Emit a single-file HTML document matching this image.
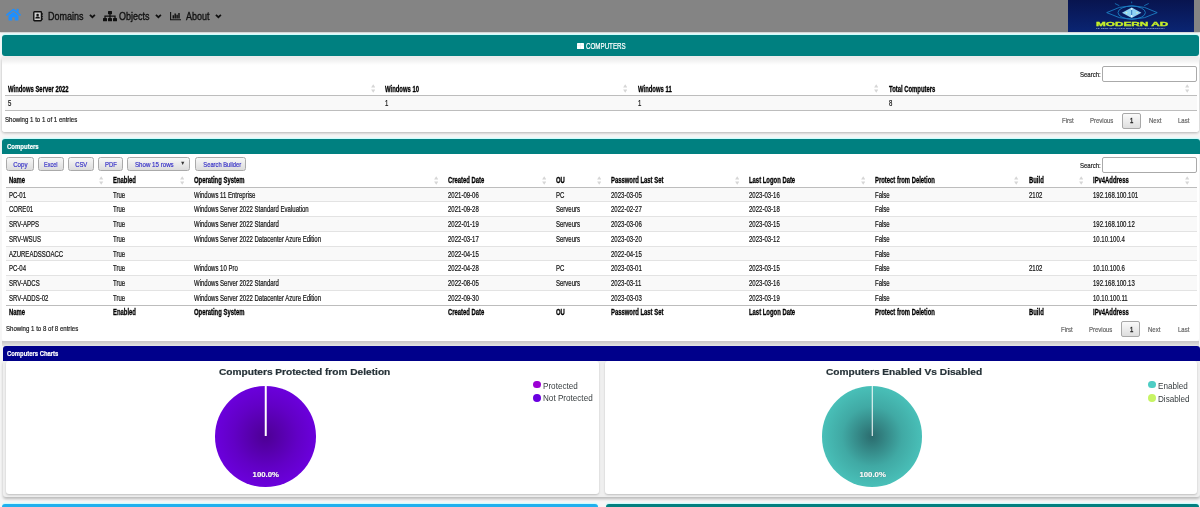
<!DOCTYPE html>
<html lang="en"><head><meta charset="utf-8"><title>Modern AD - Computers</title>
<style>
html,body{margin:0;padding:0}
body{width:1200px;height:507px;overflow:hidden;position:relative;background:#f6f6f6;font-family:"Liberation Sans",sans-serif;font-size:8px;color:#222;}
.c{display:inline-block;transform:scaleX(.75);transform-origin:0 50%;white-space:nowrap;-webkit-text-stroke:.22px}
#nav{position:absolute;left:0;top:0;width:1200px;height:31.5px;background:#848484;box-shadow:0 .5px 1.5px rgba(0,0,0,.35)}
#nav .t{position:absolute;top:9.1px;font-size:11px;color:#111;line-height:14px;transform:scaleX(.815);-webkit-text-stroke:.35px}
#nav svg{position:absolute}
#logo{position:absolute;left:1068px;top:0;width:126px;height:31.5px;background:linear-gradient(#08144f,#0a2573);overflow:hidden}
.hdr{position:absolute;left:2.3px;width:1197.7px;color:#fff;font-weight:bold}
.teal{background:#008080;box-shadow:0 -1px 1.5px rgba(190,255,255,.9)}
.navy{background:#00008b}
.hdr .c{position:absolute;left:4.3px}
.card{position:absolute;left:2px;width:1197px;background:#fff;border-radius:0 0 3px 3px;box-shadow:0 1px 3px rgba(0,0,0,.28)}
table.dt{position:absolute;border-collapse:collapse;table-layout:fixed;font-size:8.3px}
table.dt td .c{transform:scaleX(.725);position:relative;top:.1px}
table.dt tfoot th .c{top:.1px}
table.dt th,table.dt td{padding:0 0 0 2.8px;text-align:left;position:relative;white-space:nowrap;overflow:visible}
table.dt th .c{transform:scaleX(.71);position:relative;top:.1px;-webkit-text-stroke:.3px}
table.t1 th .c{top:.8px}
table.t1 .so{right:7.7px}
table.dt thead th{height:13.5px;border-bottom:1px solid #bdbdbd;font-weight:bold;color:#000;vertical-align:middle}
table.dt tfoot th{height:13.5px;font-weight:bold;color:#000;vertical-align:middle}
table.dt td{height:13.75px;border-top:1px solid #e3e3e3;color:#151515;vertical-align:middle}
table.dt tbody tr:first-child td{border-top:none}
table.dt tbody tr.odd td{background:#f9f9f9}
table.dt tbody tr:last-child td{border-bottom:1px solid #bdbdbd}
.so{position:absolute;right:7px;top:2.4px}
.srch{position:absolute;font-size:8px}
.inp{position:absolute;left:1102px;width:95px;border:1px solid #aaa;border-radius:2px;background:#fff;box-sizing:border-box}
.info{position:absolute;left:5.2px;font-size:8px;color:#222;transform:scaleX(.762)}
.pg{position:absolute;left:0;width:1200px;height:16px;font-size:8px;color:#666}
.pl{position:absolute;top:3.5px;line-height:9px}
.pb{position:absolute;left:1122px;top:0;width:18.8px;height:16px;box-sizing:border-box;border:1px solid #a8a8a8;border-radius:2px;background:linear-gradient(#fafafa,#dedede);color:#222}
.pb .c{position:absolute;left:7.4px;top:2.6px;line-height:9px;-webkit-text-stroke:.35px}
.btn{position:absolute;top:157px;height:13.6px;box-sizing:border-box;border:1px solid #aaa;border-radius:2.5px;background:linear-gradient(#f8f8f8,#dcdcdc);color:#3a35c8;font-size:8px;line-height:11px;text-align:center;white-space:nowrap;overflow:visible}
.btn .c{position:relative;top:.9px;transform-origin:50% 50%}
.chart{position:absolute;top:361.2px;height:132.6px;background:#fff;border-radius:3px;box-shadow:0 1px 2px rgba(0,0,0,.2)}
.ct{position:absolute;font-weight:bold;font-size:8.6px;color:#263238;white-space:nowrap;top:366.1px;line-height:12px;transform:scaleX(1.18);transform-origin:0 50%;-webkit-text-stroke:.2px}
.lg{position:absolute;font-size:8.7px;color:#373d3f;line-height:10px;white-space:nowrap;transform:scaleX(.935);transform-origin:0 50%}
.dot{position:absolute;width:7.8px;height:7.8px;border-radius:50%;margin:-.2px 0 0 -.2px}
.pie{position:absolute;width:100.6px;height:100.6px;border-radius:50%;top:386.2px}
.pie i{position:absolute;left:49px;top:0;transform:translateX(.75px);width:1.5px;height:50.3px;background:#fff}
.pl2{position:absolute;font-size:7.8px;font-weight:bold;color:#fff;top:469.9px;-webkit-text-stroke:.15px;line-height:10px;text-shadow:0 0 1px rgba(0,0,0,.4)}
#w{position:absolute;left:0;top:0;width:1200px;height:507px;overflow:hidden;will-change:transform}
</style></head><body><div id="w">

<div id="nav">
 <svg style="left:5.9px;top:8px" width="14.95" height="13.3" viewBox="0 0 576 512"><path fill="#1e8fff" d="M280.4 148.3L96 300.1V464a16 16 0 0 0 16 16l112.1-.3a16 16 0 0 0 15.900-16V368a16 16 0 0 1 16-16h64a16 16 0 0 1 16 16v95.600a16 16 0 0 0 16 16.100L464 480a16 16 0 0 0 16-16V300L295.700 148.300a12.200 12.200 0 0 0-15.300 0zM571.600 251.500L488 182.600V44a12 12 0 0 0-12-12h-56a12 12 0 0 0-12 12v72.600L318.500 43a48 48 0 0 0-61 0L4.300 251.500a12 12 0 0 0-1.600 16.900l25.500 31a12 12 0 0 0 16.900 1.600l235.200-193.700a12.200 12.200 0 0 1 15.300 0L530.900 301a12 12 0 0 0 16.900-1.600l25.500-31a12 12 0 0 0-1.700-16.900z"/></svg>
 <svg style="left:33px;top:11px" width="10" height="10.5" viewBox="0 0 10 10.5"><rect x=".8" y=".8" width="7.6" height="8.9" rx=".6" fill="rgba(255,255,255,.6)" stroke="#111" stroke-width="1.4"/><circle cx="4.6" cy="4" r="1.3" fill="#111"/><path d="M2.3 7.6c0-1.500 1-2 2.300-2s2.300.5 2.300 2z" fill="#111"/><path d="M9.300 2.200v1.600M9.300 4.700v1.600M9.300 7.200v1.600" stroke="#111" stroke-width="1"/></svg>
 <span class="t c" style="left:48px">Domains</span>
 <svg style="left:88.500px;top:14px" width="7" height="5" viewBox="0 0 7 5"><path d="M.9.9L3.4 3.2 5.9.9" fill="none" stroke="#111" stroke-width="1.75"/></svg>
 <svg style="left:102.500px;top:11px" width="14" height="10.500" viewBox="0 0 14 10.500"><rect x="5" y="0" width="4" height="3.300" rx=".5" fill="#111"/><rect x="0" y="7" width="4" height="3.300" rx=".5" fill="#111"/><rect x="5" y="7" width="4" height="3.300" rx=".5" fill="#111"/><rect x="10" y="7" width="4" height="3.300" rx=".5" fill="#111"/><path d="M7 3v4M2 7V5.200h10V7" fill="none" stroke="#111" stroke-width="1.25"/></svg>
 <span class="t c" style="left:119px">Objects</span>
 <svg style="left:155px;top:14px" width="7" height="5" viewBox="0 0 7 5"><path d="M.9.9L3.4 3.2 5.9.9" fill="none" stroke="#111" stroke-width="1.75"/></svg>
 <svg style="left:170px;top:12px" width="11" height="8.500" viewBox="0 0 11 8.500"><path d="M.6 0v7.800h10.400" fill="none" stroke="#111" stroke-width="1.100"/><path d="M3.3 6.5V3.2M5.2 6.500V1.6M7.1 6.500V2.8M9 6.500V1" stroke="#111" stroke-width="1.45"/></svg>
 <span class="t c" style="left:185.600px">About</span>
 <svg style="left:214.500px;top:14px" width="7" height="5" viewBox="0 0 7 5"><path d="M.9.9L3.4 3.2 5.9.9" fill="none" stroke="#111" stroke-width="1.75"/></svg>
 <div id="logo">
  <svg width="126" height="31.5" viewBox="0 0 126 31.5" style="left:0;top:0">
   <path d="M38.7 12.6Q64 -1.2 89.2 12.6Q64 26 38.7 12.6Z" fill="none" stroke="#1b7fc4" stroke-width=".9"/>
   <ellipse cx="63.7" cy="12.6" rx="13.7" ry="6.5" fill="none" stroke="#1b7fc4" stroke-width=".9"/>
   <path d="M54 12.7L63.7 7.6 73.4 12.7 63.7 18Z" fill="#8fd4f5"/>
   <path d="M63.7 9.2v6.6" stroke="#2a6fb8" stroke-width=".9"/>
   <circle cx="63.7" cy="9" r=".9" fill="#e8f8ff"/><circle cx="63.7" cy="16" r=".9" fill="#e8f8ff"/><circle cx="58.5" cy="12.7" r=".8" fill="#d8f0c0"/><circle cx="69" cy="12.7" r=".8" fill="#d8f0c0"/>
   <path d="M63.7 1.6v1.7M46.9 3.5l4.4 2.2M80.700 3.5l-4.5 2.2" stroke="#1b7fc4" stroke-width=".8"/>
   <text x="28" y="26.200" font-family="Liberation Sans, sans-serif" font-weight="bold" font-size="5.8" fill="#c6ef2a" stroke="#c6ef2a" stroke-width=".3" textLength="72.2" lengthAdjust="spacingAndGlyphs">MODERN AD</text>
   <text x="28" y="28.700" font-family="Liberation Sans, sans-serif" font-weight="bold" font-size="2.1" fill="#9fb0dc" textLength="69" lengthAdjust="spacingAndGlyphs">LE SEUL MANAGER QUE L'ACTIVE DIRECTORY</text>
  </svg>
 </div>
</div>

<div class="hdr teal" style="top:35px;height:20.700px;border-radius:3px;font-weight:normal;width:1197px">
 <svg style="position:absolute;left:575px;top:7.9px" width="7" height="6.6" viewBox="0 0 7 6.500" preserveAspectRatio="none"><rect width="7" height="6.500" rx=".6" fill="#fff"/><path d="M0 2.200h7M3.500 0v6.500" stroke="#cfe8e8" stroke-width=".5"/></svg>
 <span class="c" style="left:583.6px;top:6.6px;line-height:9px;font-size:8.7px;transform:scaleX(.715)">COMPUTERS</span>
</div>
<div class="card" style="top:56.5px;height:75.5px;border-radius:3px;background:linear-gradient(#ebebeb 0,#f1f1f1 3px,#fff 8px)">
</div>
<span class="c srch" style="left:1079.800px;top:70px;line-height:9px">Search:</span>
<div class="inp" style="top:66.300px;height:15.300px"></div>
<table class="dt t1" style="left:5.4px;top:81.8px;width:1191.3px"><colgroup><col style="width:377.3px"><col style="width:252.3px"><col style="width:251.2px"><col style="width:310.5px"></colgroup><thead><tr><th><span class="c">Windows Server 2022</span><svg class="so" width="4.4" height="9" viewBox="0 0 4.4 9"><path d="M2.2 0.2 L4.3 3.4 H0.1 Z M2.2 8.8 L4.3 5.600 H0.1 Z" fill="#d6d6d6"/></svg></th><th><span class="c">Windows 10</span><svg class="so" width="4.4" height="9" viewBox="0 0 4.4 9"><path d="M2.2 0.2 L4.3 3.4 H0.1 Z M2.2 8.8 L4.3 5.600 H0.1 Z" fill="#d6d6d6"/></svg></th><th><span class="c">Windows 11</span><svg class="so" width="4.4" height="9" viewBox="0 0 4.4 9"><path d="M2.2 0.2 L4.3 3.4 H0.1 Z M2.2 8.8 L4.3 5.600 H0.1 Z" fill="#d6d6d6"/></svg></th><th><span class="c">Total Computers</span><svg class="so" width="4.4" height="9" viewBox="0 0 4.4 9"><path d="M2.2 0.2 L4.3 3.4 H0.1 Z M2.2 8.8 L4.3 5.600 H0.1 Z" fill="#d6d6d6"/></svg></th></tr></thead><tbody><tr class="odd"><td><span class="c">5</span></td><td><span class="c">1</span></td><td><span class="c">1</span></td><td><span class="c">8</span></td></tr></tbody></table>
<span class="c info" style="top:115.4px;line-height:9px">Showing 1 to 1 of 1 entries</span>
<div class="pg" style="top:112.6px;left:0px">
<span class="c pl" style="left:1061.5px">First</span>
<span class="c pl" style="left:1089.8px">Previous</span>
<span class="pb"><span class="c">1</span></span>
<span class="c pl" style="left:1149px">Next</span>
<span class="c pl" style="left:1178.4px">Last</span>
</div>

<div class="hdr teal" style="top:139px;height:15px;border-radius:3px 3px 0 0"><span class="c" style="top:2.500px;line-height:9px">Computers</span></div>
<div class="card" style="top:154px;height:187px;box-shadow:none"></div>
<div class="btn" style="left:6px;width:27.8px"><span class="c" style="transform:scaleX(.77)">Copy</span></div>
<div class="btn" style="left:37.5px;width:26.9px"><span class="c" style="transform:scaleX(.69)">Excel</span></div>
<div class="btn" style="left:68.4px;width:25.4px"><span class="c" style="transform:scaleX(.74)">CSV</span></div>
<div class="btn" style="left:98.1px;width:25.4px"><span class="c" style="transform:scaleX(.74)">PDF</span></div>
<div class="btn" style="left:127.2px;width:63.2px"><span class="c" style="position:absolute;left:7.2px;transform-origin:0 50%;transform:scaleX(.77)">Show 15 rows</span><span style="position:absolute;left:51.8px;top:-.2px;font-size:5.5px;color:#333">&#9660;</span></div>
<div class="btn" style="left:194.7px;width:50.9px"><span class="c" style="transform:scaleX(.72)">Search Builder</span></div>
<span class="c srch" style="left:1079.800px;top:161px;line-height:9px">Search:</span>
<div class="inp" style="top:157.2px;height:15.6px"></div>
<table class="dt t2" style="left:6.0px;top:173.15px;width:1190.7px"><colgroup><col style="width:104.7px"><col style="width:80.7px"><col style="width:254.1px"><col style="width:107.7px"><col style="width:55.3px"><col style="width:138.0px"><col style="width:125.7px"><col style="width:153.7px"><col style="width:64.6px"><col style="width:106.2px"></colgroup><thead><tr><th><span class="c">Name</span><svg class="so" width="4.4" height="9" viewBox="0 0 4.4 9"><path d="M2.2 0.2 L4.3 3.4 H0.1 Z M2.2 8.8 L4.3 5.600 H0.1 Z" fill="#d6d6d6"/></svg></th><th><span class="c">Enabled</span><svg class="so" width="4.4" height="9" viewBox="0 0 4.4 9"><path d="M2.2 0.2 L4.3 3.4 H0.1 Z M2.2 8.8 L4.3 5.600 H0.1 Z" fill="#d6d6d6"/></svg></th><th><span class="c">Operating System</span><svg class="so" width="4.4" height="9" viewBox="0 0 4.4 9"><path d="M2.2 0.2 L4.3 3.4 H0.1 Z M2.2 8.8 L4.3 5.600 H0.1 Z" fill="#d6d6d6"/></svg></th><th><span class="c">Created Date</span><svg class="so" width="4.4" height="9" viewBox="0 0 4.4 9"><path d="M2.2 0.2 L4.3 3.4 H0.1 Z M2.2 8.8 L4.3 5.600 H0.1 Z" fill="#d6d6d6"/></svg></th><th><span class="c">OU</span><svg class="so" width="4.4" height="9" viewBox="0 0 4.4 9"><path d="M2.2 0.2 L4.3 3.4 H0.1 Z M2.2 8.8 L4.3 5.600 H0.1 Z" fill="#d6d6d6"/></svg></th><th><span class="c">Password Last Set</span><svg class="so" width="4.4" height="9" viewBox="0 0 4.4 9"><path d="M2.2 0.2 L4.3 3.4 H0.1 Z M2.2 8.8 L4.3 5.600 H0.1 Z" fill="#d6d6d6"/></svg></th><th><span class="c">Last Logon Date</span><svg class="so" width="4.4" height="9" viewBox="0 0 4.4 9"><path d="M2.2 0.2 L4.3 3.4 H0.1 Z M2.2 8.8 L4.3 5.600 H0.1 Z" fill="#d6d6d6"/></svg></th><th><span class="c">Protect from Deletion</span><svg class="so" width="4.4" height="9" viewBox="0 0 4.4 9"><path d="M2.2 0.2 L4.3 3.4 H0.1 Z M2.2 8.8 L4.3 5.600 H0.1 Z" fill="#d6d6d6"/></svg></th><th><span class="c">Build</span><svg class="so" width="4.4" height="9" viewBox="0 0 4.4 9"><path d="M2.2 0.2 L4.3 3.4 H0.1 Z M2.2 8.8 L4.3 5.600 H0.1 Z" fill="#d6d6d6"/></svg></th><th><span class="c">IPv4Address</span><svg class="so" width="4.4" height="9" viewBox="0 0 4.4 9"><path d="M2.2 0.2 L4.3 3.4 H0.1 Z M2.2 8.8 L4.3 5.600 H0.1 Z" fill="#d6d6d6"/></svg></th></tr></thead><tbody><tr class="odd"><td><span class="c">PC-01</span></td><td><span class="c">True</span></td><td><span class="c">Windows 11 Entreprise</span></td><td><span class="c">2021-09-06</span></td><td><span class="c">PC</span></td><td><span class="c">2023-03-05</span></td><td><span class="c">2023-03-16</span></td><td><span class="c">False</span></td><td><span class="c">2102</span></td><td><span class="c">192.168.100.101</span></td></tr><tr class="even"><td><span class="c">CORE01</span></td><td><span class="c">True</span></td><td><span class="c">Windows Server 2022 Standard Evaluation</span></td><td><span class="c">2021-09-28</span></td><td><span class="c">Serveurs</span></td><td><span class="c">2022-02-27</span></td><td><span class="c">2022-03-18</span></td><td><span class="c">False</span></td><td><span class="c"></span></td><td><span class="c"></span></td></tr><tr class="odd"><td><span class="c">SRV-APPS</span></td><td><span class="c">True</span></td><td><span class="c">Windows Server 2022 Standard</span></td><td><span class="c">2022-01-19</span></td><td><span class="c">Serveurs</span></td><td><span class="c">2023-03-06</span></td><td><span class="c">2023-03-15</span></td><td><span class="c">False</span></td><td><span class="c"></span></td><td><span class="c">192.168.100.12</span></td></tr><tr class="even"><td><span class="c">SRV-WSUS</span></td><td><span class="c">True</span></td><td><span class="c">Windows Server 2022 Datacenter Azure Edition</span></td><td><span class="c">2022-03-17</span></td><td><span class="c">Serveurs</span></td><td><span class="c">2023-03-20</span></td><td><span class="c">2023-03-12</span></td><td><span class="c">False</span></td><td><span class="c"></span></td><td><span class="c">10.10.100.4</span></td></tr><tr class="odd"><td><span class="c">AZUREADSSOACC</span></td><td><span class="c">True</span></td><td><span class="c"></span></td><td><span class="c">2022-04-15</span></td><td><span class="c"></span></td><td><span class="c">2022-04-15</span></td><td><span class="c"></span></td><td><span class="c">False</span></td><td><span class="c"></span></td><td><span class="c"></span></td></tr><tr class="even"><td><span class="c">PC-04</span></td><td><span class="c">True</span></td><td><span class="c">Windows 10 Pro</span></td><td><span class="c">2022-04-28</span></td><td><span class="c">PC</span></td><td><span class="c">2023-03-01</span></td><td><span class="c">2023-03-15</span></td><td><span class="c">False</span></td><td><span class="c">2102</span></td><td><span class="c">10.10.100.6</span></td></tr><tr class="odd"><td><span class="c">SRV-ADCS</span></td><td><span class="c">True</span></td><td><span class="c">Windows Server 2022 Standard</span></td><td><span class="c">2022-08-05</span></td><td><span class="c">Serveurs</span></td><td><span class="c">2023-03-11</span></td><td><span class="c">2023-03-16</span></td><td><span class="c">False</span></td><td><span class="c"></span></td><td><span class="c">192.168.100.13</span></td></tr><tr class="even"><td><span class="c">SRV-ADDS-02</span></td><td><span class="c">True</span></td><td><span class="c">Windows Server 2022 Datacenter Azure Edition</span></td><td><span class="c">2022-09-30</span></td><td><span class="c"></span></td><td><span class="c">2023-03-03</span></td><td><span class="c">2023-03-19</span></td><td><span class="c">False</span></td><td><span class="c"></span></td><td><span class="c">10.10.100.11</span></td></tr></tbody><tfoot><tr><th><span class="c">Name</span></th><th><span class="c">Enabled</span></th><th><span class="c">Operating System</span></th><th><span class="c">Created Date</span></th><th><span class="c">OU</span></th><th><span class="c">Password Last Set</span></th><th><span class="c">Last Logon Date</span></th><th><span class="c">Protect from Deletion</span></th><th><span class="c">Build</span></th><th><span class="c">IPv4Address</span></th></tr></tfoot></table>
<span class="c info" style="top:324px;left:5.9px;line-height:9px">Showing 1 to 8 of 8 entries</span>
<div class="pg" style="top:321.3px;left:-0.9px">
<span class="c pl" style="left:1061.5px">First</span>
<span class="c pl" style="left:1089.8px">Previous</span>
<span class="pb"><span class="c">1</span></span>
<span class="c pl" style="left:1149px">Next</span>
<span class="c pl" style="left:1178.4px">Last</span>
</div>

<div style="position:absolute;left:2px;top:341px;width:1197px;height:5px;background:linear-gradient(#c9c7c9 0,#cfcdcf 30%,#e4e4e4 100%)"></div>
<div class="hdr navy" style="left:2.6px;width:1197.4px;top:345.8px;height:15.1px;border-radius:3px 3px 0 0"><span class="c" style="top:2.9px;left:4.1px;line-height:9px;transform:scaleX(.735)">Computers Charts</span></div>
<div class="card" style="left:2.6px;top:360.9px;height:136.4px;background:#efefef;box-shadow:0 2px 3px rgba(0,0,0,.25)"></div>
<div class="chart" style="left:5.8px;width:592.9px"></div>
<div class="chart" style="left:604.500px;width:592.500px"></div>
<div class="ct" style="left:219px">Computers Protected from Deletion</div>
<div class="ct" style="left:826px">Computers Enabled Vs Disabled</div>
<div class="pie" style="left:215px;background:radial-gradient(circle,#4d0094 0%,#6200c6 45%,#7200ee 92%)"><i></i></div>
<div class="pie" style="left:821.8px;background:radial-gradient(circle,#2b6c6e 0%,#40a9a4 42%,#4ecdc4 88%)"><i></i></div>
<div class="pl2" style="left:252.6px">100.0%</div>
<div class="pl2" style="left:859.4px">100.0%</div>
<div class="dot" style="left:533.3px;top:380.8px;background:#9c00d4"></div><div class="lg" style="left:543px;top:380.5px">Protected</div>
<div class="dot" style="left:533.3px;top:393.9px;background:#6a00e0"></div><div class="lg" style="left:543px;top:393.4px">Not Protected</div>
<div class="dot" style="left:1147.9px;top:380.8px;background:#4ecdc4"></div><div class="lg" style="left:1157.6px;top:380.7px">Enabled</div>
<div class="dot" style="left:1147.9px;top:393.9px;background:#c7f464"></div><div class="lg" style="left:1157.6px;top:393.6px">Disabled</div>

<div style="position:absolute;left:2px;top:504.2px;width:595.5px;height:6px;background:#1fb0ee;box-shadow:0 -1px 1.5px rgba(190,255,255,.9);border-radius:3px 3px 0 0"></div>
<div style="position:absolute;left:605.5px;top:504.2px;width:593px;height:6px;background:#008080;box-shadow:0 -1px 1.5px rgba(190,255,255,.9);border-radius:3px 3px 0 0"></div>
</div></body></html>
